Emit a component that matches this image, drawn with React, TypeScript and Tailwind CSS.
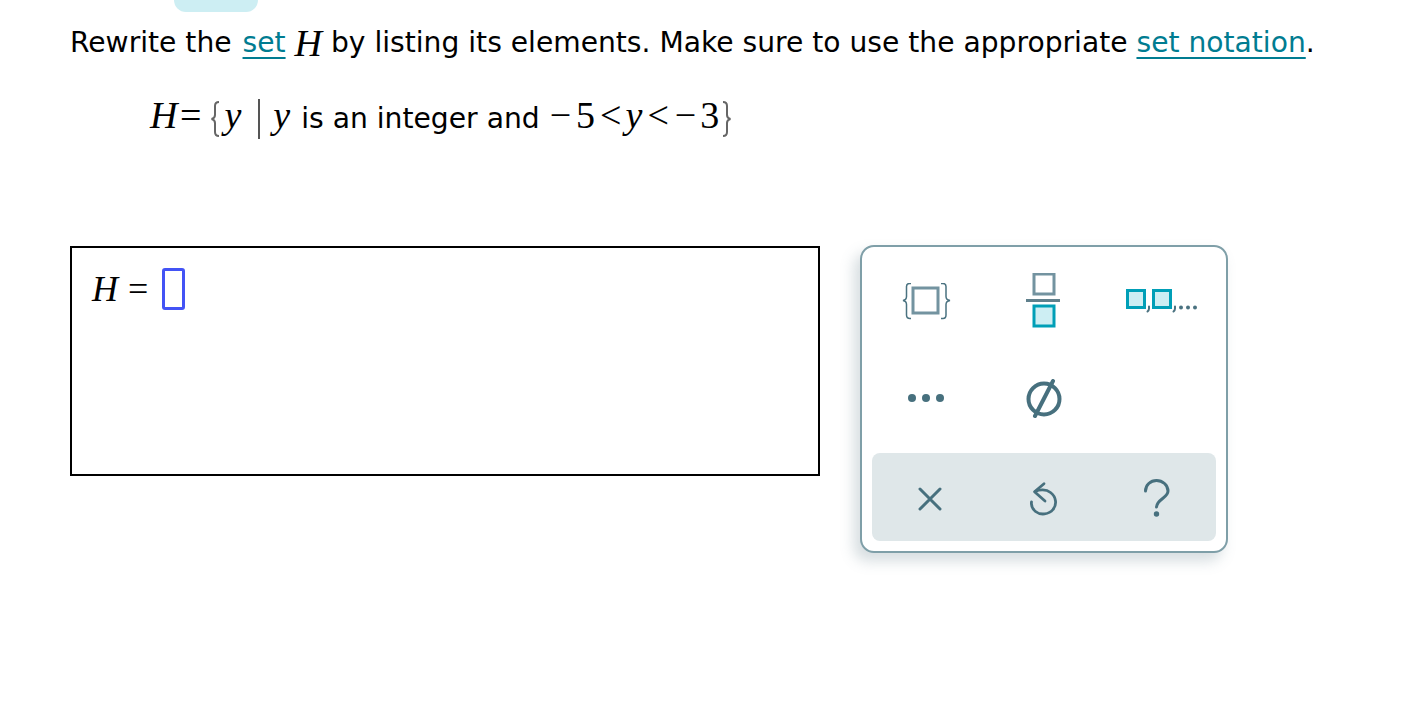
import React from "react";

const serif = "font-['Liberation_Serif',serif]";
const Var = ({ c, className = "" }: { c: string; className?: string }) => (
  <span className={`${serif} italic ${className}`}>{c}</span>
);

const Btn = ({ children, className = "" }: { children: React.ReactNode; className?: string }) => (
  <div className={`flex items-center justify-center ${className}`}>{children}</div>
);

const Brace = ({ flip = false }: { flip?: boolean }) => (
  <svg width="10" height="36" viewBox="0 0 10 36" fill="none" stroke="#666" strokeWidth="2" className={flip ? "-scale-x-100" : ""}>
    <path d="M9 1C6 1 5 2.5 5 5V14C5 16 4 17.5 1.5 18C4 18.5 5 20 5 22V31C5 33.5 6 35 9 35" />
  </svg>
);

export default function App() {
  return (
    <div className="relative w-[1404px] h-[718px] bg-white overflow-hidden font-['DejaVu_Sans',sans-serif] text-black">
      <div className="ml-[174px] w-[84px] h-[12px] bg-[#cdeef3] rounded-b-[12px]" />

      <div className="ml-[70px] mt-[9px] h-[44px] flex items-center text-[28.16px] leading-[44px] whitespace-nowrap">
        <span>Rewrite the&nbsp;</span>
        <span className="ml-[2px] text-[#007c91] underline underline-offset-[5px] decoration-[2px]">set</span>
        <span>&nbsp;</span>
        <Var c="H" className="text-[38px]" />
        <span>&nbsp;by listing its elements. Make sure to use the appropriate&nbsp;</span>
        <span className="text-[#007c91] underline underline-offset-[5px] decoration-[2px]">set notation</span>
        <span>.</span>
      </div>

      <div className="ml-[150px] mt-[32px] h-[44px] flex items-baseline whitespace-nowrap text-[28.2px] leading-[36px]">
        <Var c="H" className="text-[38px] leading-[36px] w-[29px]" />
        <span className={`${serif} text-[38px] leading-[36px] ml-[1px]`}>=</span>
        <span className="ml-[9px] self-center"><Brace /></span>
        <Var c="y" className="text-[38px] leading-[36px] ml-[4px]" />
        <span className="w-[2px] h-[40px] bg-[#555] ml-[17px] mr-[13px] self-center" />
        <Var c="y" className="text-[38px] leading-[36px]" />
        <span className="ml-[11px]">is an integer and</span>
        <span className={`${serif} text-[38px] leading-[36px] ml-[10px]`}>−</span>
        <span className={`${serif} text-[38px] leading-[36px] ml-[5px]`}>5</span>
        <span className={`${serif} text-[38px] leading-[36px] ml-[5px]`}>&lt;</span>
        <Var c="y" className="text-[38px] leading-[36px] ml-[4px]" />
        <span className={`${serif} text-[38px] leading-[36px] ml-[5px]`}>&lt;</span>
        <span className={`${serif} text-[38px] leading-[36px] ml-[6px]`}>−</span>
        <span className={`${serif} text-[38px] leading-[36px] ml-[4px]`}>3</span>
        <span className="ml-[3px] self-center"><Brace flip /></span>
      </div>

      <div className="mt-[105px] ml-[70px] flex items-start">
        <div className="w-[750px] h-[230px] border-2 border-black pl-[20px] pt-[19px]">
          <div className="flex items-center h-[44px]">
            <Var c="H" className="text-[36px]" />
            <span className={`${serif} text-[36px] ml-[10px]`}>=</span>
            <span className="ml-[14px] w-[23px] h-[42px] border-[3px] border-[#4353f5] rounded-[3px]" />
          </div>
        </div>

        <div className="ml-[40px] -mt-[1px] w-[368px] h-[308px] rounded-[14px] border-2 border-[#7f9fa8] bg-white shadow-[-6px_8px_14px_rgba(90,120,130,0.25)] p-[10px] flex flex-col">
          <div className="grid grid-cols-3 h-[196px] grid-rows-2">
            <Btn className="pb-[6px] pr-[4px]">
              <svg width="50" height="40" viewBox="0 0 50 40" fill="none">
                <rect x="11" y="5" width="25" height="25" stroke="#7393a0" strokeWidth="3" />
                <path d="M9 0.5H7.5C5.5 0.5 4.5 1.5 4.5 3.5V13.5C4.5 15.5 3.5 17 1 17.5C3.5 18 4.5 19.5 4.5 21.5V32C4.5 34 5.5 35.5 8 35.5H9" stroke="#4a7280" strokeWidth="1.5" />
                <path d="M39 0.5H41C43 0.5 44 1.5 44 3.5V13.5C44 15.5 45 17 48 17.5C45 18 44 19.5 44 21.5V32C44 34 43 35.5 41 35.5H39" stroke="#4a7280" strokeWidth="1.5" />
              </svg>
            </Btn>
            <Btn className="pb-[10px]">
              <svg width="36" height="56" viewBox="0 0 36 56" fill="none">
                <rect x="8" y="1" width="20" height="20" stroke="#7393a0" strokeWidth="3" />
                <rect x="0" y="26" width="34" height="3" fill="#60808c" />
                <rect x="8" y="33" width="20" height="20" fill="#cdeef3" stroke="#009fb7" strokeWidth="3" />
              </svg>
            </Btn>
            <Btn className="pb-[10px] pl-[6px]">
              <svg width="72" height="24" viewBox="0 0 72 24" fill="none">
                <rect x="1.5" y="1.5" width="17" height="17" fill="#cdeef3" stroke="#009fb7" strokeWidth="3" />
                <rect x="27.5" y="1.5" width="17" height="17" fill="#cdeef3" stroke="#009fb7" strokeWidth="3" />
                <path d="M23 17.5V19.5C23 21 22.3 21.8 21.5 22.5M49 17.5V19.5C49 21 48.3 21.8 47.5 22.5" stroke="#4a7280" strokeWidth="2" strokeLinecap="round" />
                <circle cx="55" cy="18.5" r="2" fill="#4a7280" />
                <circle cx="62" cy="18.5" r="2" fill="#4a7280" />
                <circle cx="69" cy="18.5" r="2" fill="#4a7280" />
              </svg>
            </Btn>
            <Btn className="pb-[12px] pr-[4px]">
              <svg width="38" height="10" viewBox="0 0 38 10" fill="#47707e">
                <circle cx="4" cy="5" r="4" />
                <circle cx="18" cy="5" r="4" />
                <circle cx="32" cy="5" r="4" />
              </svg>
            </Btn>
            <Btn className="pb-[10px]">
              <svg width="38" height="40" viewBox="0 0 38 40" fill="none" stroke="#47707e" strokeWidth="4" strokeLinecap="round">
                <circle cx="19" cy="20" r="15.5" />
                <path d="M28 2L10 37" />
              </svg>
            </Btn>
            <div />
          </div>
          <div className="h-[88px] rounded-[8px] bg-[#dfe7e9] grid grid-cols-3">
            <Btn className="pt-[3px] pl-[2px]">
              <svg width="24" height="24" viewBox="0 0 24 24" fill="none" stroke="#47707e" strokeWidth="3" strokeLinecap="round">
                <path d="M2 2L22 22M22 2L2 22" />
              </svg>
            </Btn>
            <Btn className="pt-[3px]">
              <svg width="28" height="36" viewBox="0 0 28 36" fill="none" stroke="#47707e" strokeWidth="2.8" strokeLinecap="round" strokeLinejoin="round">
                <path d="M5.5 10.5C9 8.5 16 8 20.5 11.5C26.5 16 27 24 23 28.5C19 33.5 10.5 34.5 5.5 30.5C2.5 28 1 24.5 1.5 21" />
                <path d="M14 2.7L4.5 10.7L15 20" />
              </svg>
            </Btn>
            <Btn className="pr-[3px] pt-[1px]">
              <svg width="26" height="38" viewBox="0 0 26 38" fill="none" stroke="#47707e" strokeWidth="3" strokeLinecap="round">
                <path d="M1.5 12C1.5 6 6.5 1.5 12.5 1.5C18.5 1.5 24 6 24 12C24 19 13 20 12.5 28" />
                <circle cx="12.5" cy="35" r="1.2" fill="#47707e" />
              </svg>
            </Btn>
          </div>
        </div>
      </div>
    </div>
  );
}
